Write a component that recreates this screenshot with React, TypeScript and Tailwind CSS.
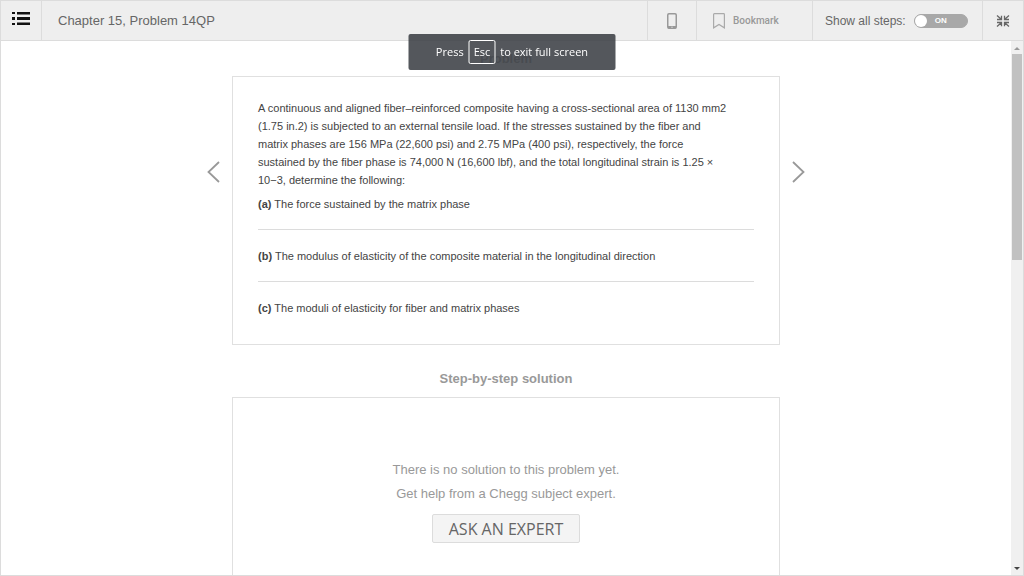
import { useState } from 'react';

const parts = [
  { id: 'a', text: 'The force sustained by the matrix phase' },
  { id: 'b', text: 'The modulus of elasticity of the composite material in the longitudinal direction' },
  { id: 'c', text: 'The moduli of elasticity for fiber and matrix phases' },
];

function ListIcon() {
  return (
    <svg width="18" height="14" viewBox="0 0 18 14" fill="#111">
      <path d="M0 0h3v2H0zM0 5h3v3H0zM0 11h3v2H0zM5 0h13v2.500H5zM5 5h13v3H5zM5 10.500h13V13H5z" />
    </svg>
  );
}

function PhoneIcon() {
  return (
    <svg width="10" height="16" viewBox="0 0 10 16">
      <rect x="0.75" y="0.75" width="8.5" height="14.5" rx="1.2" fill="none" stroke="#999" strokeWidth="1.5" />
      <path d="M1 13h8v2.500H1z" fill="#999" />
      <circle cx="5" cy="14.2" r="0.6" fill="#eee" />
    </svg>
  );
}

function BookmarkIcon() {
  return (
    <svg width="12" height="16" viewBox="0 0 12 16" fill="none" stroke="#aaa" strokeWidth="1.2">
      <path d="M0.6 1.400q0-.8.8-.8h9.200q.8 0 .8.8v13.400L6 11.400.6 14.800z" />
    </svg>
  );
}

function CollapseIcon() {
  return (
    <svg width="14" height="12" viewBox="0 0 14 12" fill="none" stroke="#666" strokeWidth="1.3">
      <path d="M1 0.500l4 3.500M5.500 0.800v3.700H1M13 0.500L9 4M8.500 0.800v3.700H13M1 11.500l4-3.500M5.500 11.200V7.500H1M13 11.500L9 8M8.500 11.200V7.500H13" />
    </svg>
  );
}

function Chevron({ direction }: { direction: 'left' | 'right' }) {
  return (
    <svg width="13" height="22" viewBox="0 0 13 22" fill="none" stroke="#999" strokeWidth="1.8">
      <path d={direction === 'left' ? 'M12 1L1.500 11 12 21' : 'M1 1l10.500 10L1 21'} />
    </svg>
  );
}

export default function App() {
  const [showAll, setShowAll] = useState(true);

  return (
    <div className="h-screen flex flex-col overflow-hidden border border-[#dcdcdc] bg-white font-['Liberation_Sans',Arial,sans-serif] text-[#444]">
      <header className="h-10 shrink-0 flex items-stretch bg-[#eee] border-b border-[#dcdcdc] text-[#666]">
        <button type="button" aria-label="Contents" className="w-[41px] pb-1 flex items-center justify-center border-r border-[#dcdcdc]">
          <ListIcon />
        </button>
        <h1 className="flex-1 flex items-center pl-4 text-[13px]">Chapter 15, Problem 14QP</h1>
        <button type="button" aria-label="Mobile view" className="w-[49px] flex items-center justify-center border-l border-[#dcdcdc]">
          <PhoneIcon />
        </button>
        <button type="button" className="w-[116px] pl-4 flex items-center gap-2 border-l border-[#dcdcdc] text-[10px] font-medium text-[#999] font-[Roboto,sans-serif]">
          <BookmarkIcon />
          Bookmark
        </button>
        <label className="w-[170px] pl-3 flex items-center gap-2 border-l border-[#dcdcdc] text-xs">
          <span className="whitespace-nowrap">Show all steps:</span>
          <input
            type="checkbox"
            className="sr-only"
            checked={showAll}
            onChange={(e) => setShowAll(e.target.checked)}
          />
          <span className="w-[54px] h-[14px] flex items-center rounded-full bg-[#a8a8a8] border border-[#a8a8a8]">
            <span className="size-3 rounded-full bg-white" />
            <span className="pl-2 text-[8px] leading-3 font-bold text-white">{showAll ? 'ON' : 'OFF'}</span>
          </span>
        </label>
        <button type="button" aria-label="Exit full screen" className="w-[41px] flex items-center justify-center border-l border-[#dcdcdc]">
          <CollapseIcon />
        </button>
      </header>

      <div className="flex-1 min-h-0 flex">
        <main className="flex-1 overflow-hidden flex flex-col items-center">
          <h2 className="pt-2 h-[35px] text-[13px] leading-5 font-bold text-[#999]">Problem</h2>

          <div className="flex items-start justify-center gap-3">
            <button type="button" aria-label="Previous problem" className="mt-[85px]">
              <Chevron direction="left" />
            </button>
            <section className="w-[548px] px-[25px] pt-[22px] pb-[27px] border border-[#e0e0e0] text-[11px] leading-[18px]">
              <p className="mb-[6px]">
                A continuous and aligned fiber–reinforced composite having a cross-sectional area of 1130 mm2
                <br />
                (1.75 in.2) is subjected to an external tensile load. If the stresses sustained by the fiber and
                <br />
                matrix phases are 156 MPa (22,600 psi) and 2.75 MPa (400 psi), respectively, the force
                <br />
                sustained by the fiber phase is 74,000 N (16,600 lbf), and the total longitudinal strain is 1.25 ×
                <br />
                10−3, determine the following:
              </p>
              {parts.map((part) => (
                <p key={part.id} className="not-last:pb-4 not-last:mb-[17px] not-last:border-b border-[#dcdcdc]">
                  <b>({part.id})</b> {part.text}
                </p>
              ))}
            </section>
            <button type="button" aria-label="Next problem" className="mt-[85px]">
              <Chevron direction="right" />
            </button>
          </div>

          <h2 className="pt-6 pb-2 text-[13px] leading-5 font-bold text-[#999]">Step-by-step solution</h2>
          <section className="w-[548px] flex-1 pt-[60px] flex flex-col items-center border border-b-0 border-[#e0e0e0] text-[13px] leading-6 text-[#999]">
            <p>There is no solution to this problem yet.</p>
            <p>Get help from a Chegg subject expert.</p>
            <button
              type="button"
              className="mt-2 w-[148px] h-[29px] rounded-xs border border-[#dcdcdc] bg-[#f4f4f4] text-base leading-6 text-[#666] font-['Open_Sans',sans-serif]"
            >
              ASK AN EXPERT
            </button>
          </section>
        </main>

        <div className="w-3 shrink-0 flex flex-col items-center bg-[#f0f0f0]">
          <svg width="12" height="13" viewBox="0 0 12 13" fill="#999">
            <path d="M3 9L6 6l3 3z" />
          </svg>
          <div className="w-[10px] h-[206px] bg-[#c1c1c1]" />
          <svg className="mt-auto" width="12" height="13" viewBox="0 0 12 13" fill="#444">
            <path d="M3 5L6 8l3-3z" />
          </svg>
        </div>
      </div>

      <div className="fixed top-[34px] left-1/2 -translate-x-1/2 w-[207px] h-9 flex items-center justify-center gap-[5px] rounded-xs bg-[#3c4045]/88 text-[11px] text-white font-['Open_Sans',sans-serif] whitespace-nowrap">
        <span>Press</span>
        <kbd className="h-6 px-1 flex items-center rounded-xs border border-white font-['Open_Sans',sans-serif]">Esc</kbd>
        <span>to exit full screen</span>
      </div>
    </div>
  );
}
